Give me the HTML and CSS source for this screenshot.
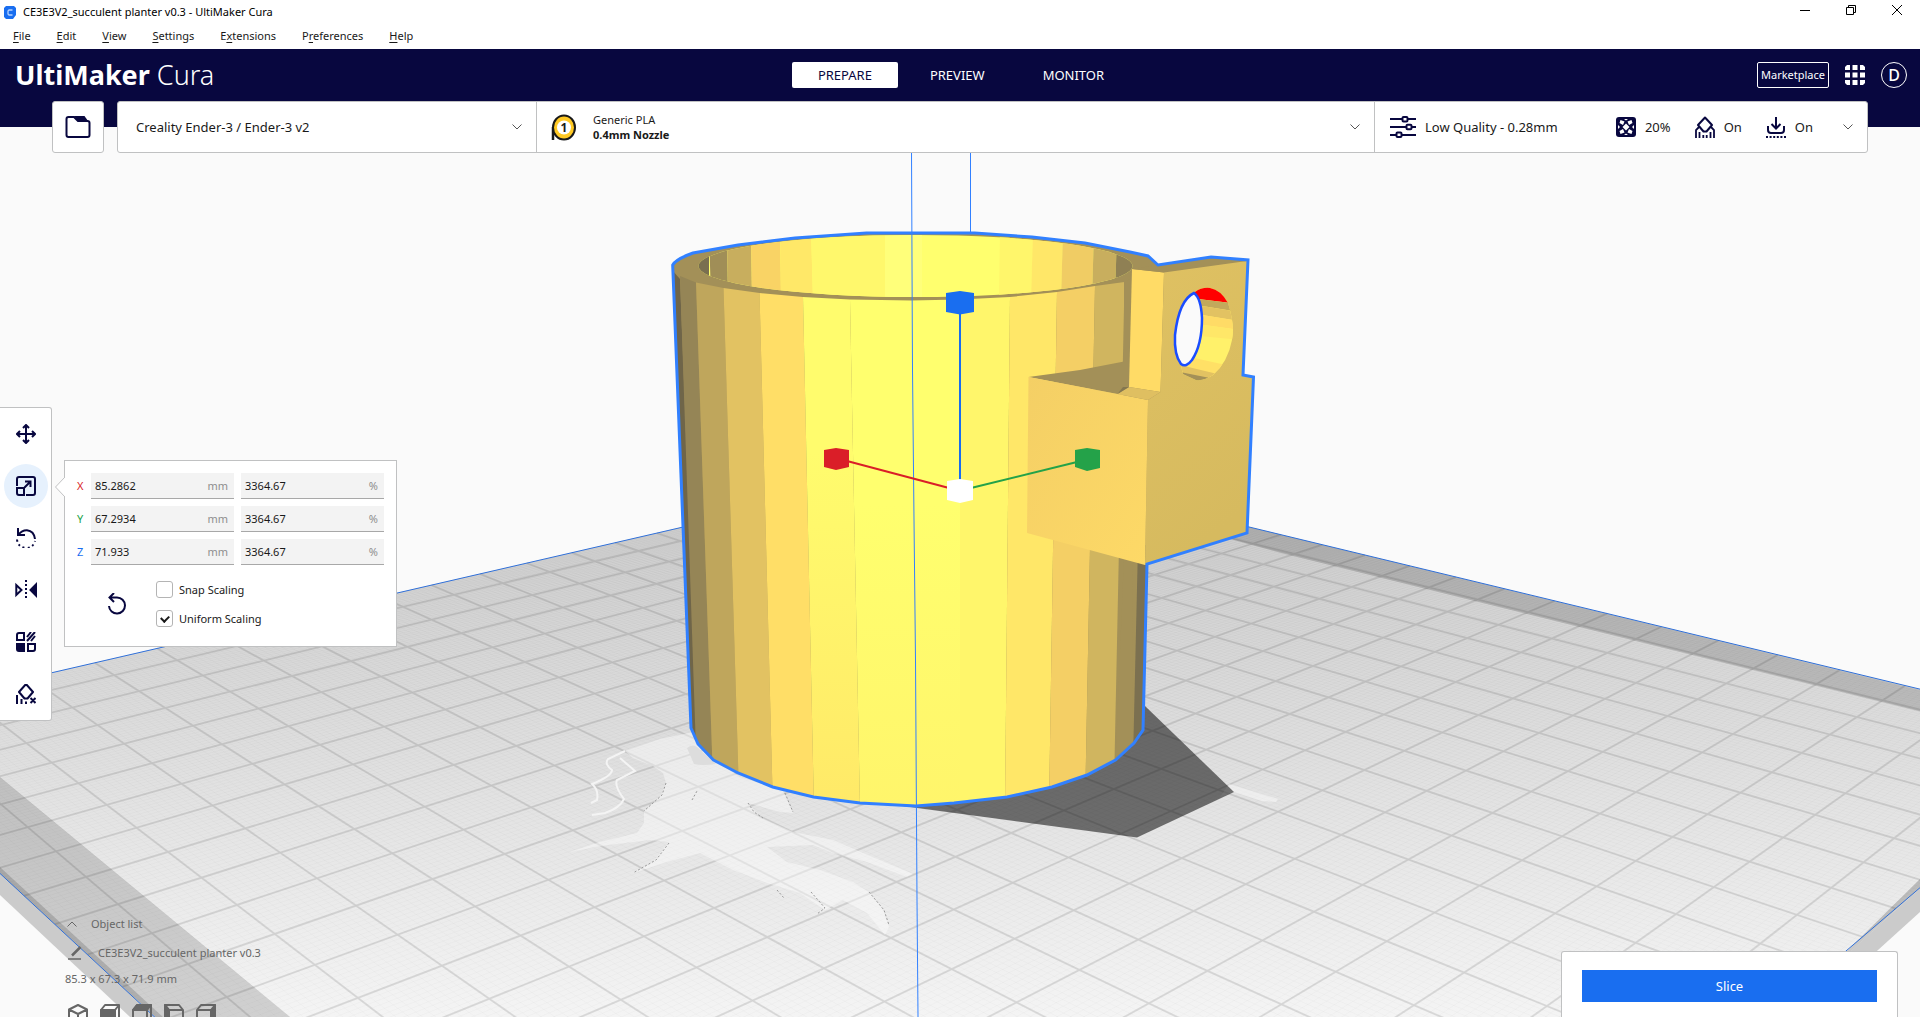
FILE: index.html
```html
<!DOCTYPE html>
<html lang="en">
<head>
<meta charset="utf-8">
<meta name="viewport" content="width=device-width, initial-scale=1">
<title>CE3E3V2_succulent planter v0.3 - UltiMaker Cura</title>
<link rel="stylesheet" href="styles.css">
</head>
<body>
<div class="titlebar">
  <svg class="app-icon" viewBox="0 0 12 13"><path d="M2 0h8l2 2v7l-3 4H2L0 11V2z" fill="#196ef0"/><path d="M8.500 4H5L4 5v3l1 1h3.500" fill="none" stroke="#b5d2ff" stroke-width="1.300"/></svg>
  <span class="window-title">CE3E3V2_succulent planter v0.3 - UltiMaker Cura</span>
  <div class="window-buttons">
    <button aria-label="Minimize"><svg viewBox="0 0 12 12"><path d="M1 6.500h10"/></svg></button>
    <button aria-label="Restore"><svg viewBox="0 0 12 12"><path d="M1.500 3.500h7v7h-7zM3.500 3.500v-2h7v7h-2"/></svg></button>
    <button aria-label="Close"><svg viewBox="0 0 12 12"><path d="M1 1l10 10M11 1L1 11"/></svg></button>
  </div>
</div>
<nav class="menubar">
  <button><u>F</u>ile</button><button><u>E</u>dit</button><button><u>V</u>iew</button><button><u>S</u>ettings</button><button>E<u>x</u>tensions</button><button>P<u>r</u>eferences</button><button><u>H</u>elp</button>
</nav>

<div class="stage">
  <svg class="scene" viewBox="0 49 1920 968" preserveAspectRatio="xMidYMin slice" aria-hidden="true">
    <defs>
      <linearGradient id="plate" gradientUnits="userSpaceOnUse" x1="0" y1="500" x2="0" y2="1017"><stop offset="0" stop-color="#cccccc"/><stop offset=".5" stop-color="#dfdfdf"/><stop offset="1" stop-color="#f4f4f4"/></linearGradient>
      <linearGradient id="warm" x1="0" y1="0" x2="0" y2="1"><stop offset=".3" stop-color="#fffc6d"/><stop offset="1" stop-color="#ffe968"/></linearGradient>
      <linearGradient id="core" x1="0" y1="0" x2="0" y2="1"><stop offset=".4" stop-color="#ffff6e"/><stop offset="1" stop-color="#fff56b"/></linearGradient>
      <linearGradient id="arm" x1="0" y1="0" x2=".3" y2="1"><stop offset="0" stop-color="#dfc162"/><stop offset="1" stop-color="#d6ba5f"/></linearGradient>
      <linearGradient id="block" x1="0" y1="0" x2="1" y2="1"><stop offset="0" stop-color="#f4cf65"/><stop offset="1" stop-color="#fdd967"/></linearGradient>
      <path id="mug-shape" d="M672.700 265Q676 259 693 253L738 245L795 238L866.500 233H974.700L1032 237L1085 243L1130 252L1148 256L1158 265L1211 257L1248 260L1243 375L1253.500 377L1247 533L1147 564L1143 730L1134 743L1115.500 760L1087 775L1052 787L1007 797L954 803L916 806L860 803L813.500 797L772.700 787L738 773L713.500 760L698 744L691 728L683 526Z"/>
      <clipPath id="mug-clip"><use href="#mug-shape"/></clipPath>
      <clipPath id="bore"><ellipse cx="915.500" cy="266" rx="217" ry="31"/></clipPath>
      <clipPath id="hole"><path d="M1195 292Q1202 287 1210 288Q1221 290 1228 303Q1235 325 1232 340Q1228 362 1213 375Q1204 381 1196 380L1183 374L1177 350L1180 315Z"/></clipPath>
    </defs>
    <g id="bed"></g>
    <path d="M1147 514L1160 517L1249 527L1920 690V711.500L1280 552.700L1234 540Z" fill="#000" opacity=".15"/>
    <path d="M0 777L290 1017H163L0 867Z" fill="#000" opacity=".145"/>
    <path d="M0 867L163 1017H155L0 874Z" fill="#000" opacity=".28"/>
    <path d="M0 874L155 1017H130L0 895Z" fill="#cbcbcb"/>
    <path d="M1920 879L1780 1017H1779L1920 888Z" fill="#000" opacity=".2"/>
    <path d="M1920 888L1778 1017H1804L1920 912Z" fill="#cbcbcb"/>
    <path id="bed-edge" fill="none" stroke="#2f6fd8" stroke-width="1"/>
    <g class="marks">
      <path d="M625 751L660 739L693 732L700 746L717 762L740 777L783 791L793 813L780 812L748 803L760 817L793 832L833 840L863 853L913 874L907 877L867 862L833 853L813 845L767 847L787 862L820 870L853 882L870 893L883 910L889 927L885 935L867 913L843 900L825 910L800 893L767 883L733 870L700 853L667 862L633 873L653 862L669 842L650 840L600 846L570 852L600 842L637 833L644 823L644 811L660 797L666 783L663 773L653 766L633 758Z"/>
      <path d="M687 748Q694 742 700 750L716 764Q702 766 694 764Z" class="hollow"/>
      <path class="trace" d="M625 751L608 759Q604 764 612 770Q612 776 592 784Q599 790 597 800L591 803M620 758L635 771L617 780Q614 786 624 799Q620 808 605 813L592 815"/>
      <path d="M1229 784L1278 799L1276 802L1262 801L1234 792L1220 797Z"/>
      <path class="dash" d="M785 793L793 812M748 803L754 812L763 818M666 783L662 795L644 811M669 843L656 860L633 873M869 892L884 910L889 925M777 890L784 898M811 892L825 908L817 914M692 800L697 791"/>
    </g>
    <path d="M1145 706L1234 792L1137 837.500L895 805L1000 740Z" fill="#000" opacity=".53"/>
    <path d="M970.500 150V234" stroke="#3180ff"/>

    <use href="#mug-shape" fill="#a39058"/>
    <g clip-path="url(#mug-clip)">
      <path d="M672 270L680 279L698 744V810H680L670 300Z" fill="#6f6549"/>
      <path d="M680 276L696 282.500L714 810H698Z" fill="#958556"/>
      <path d="M696 282.500L723.500 288L739.500 810H714Z" fill="#bfa65c"/>
      <path d="M723.500 288L759.500 293L773 810H739.500Z" fill="#e2c262"/>
      <path d="M759.500 293L803 297L814 810H773Z" fill="#ffde67"/>
      <path d="M803 297L850 299.500L860 810H814Z" fill="url(#warm)"/>
      <path d="M850 299.500L911 300.500L960 299.500V810H860Z" fill="url(#core)"/>
      <path d="M960 299.500L1010 297L1005 810H960Z" fill="#fff66b"/>
      <path d="M1010 297L1057 292L1049 810H1005Z" fill="#ffe768"/>
      <path d="M1057 292L1095 286L1085 810H1049Z" fill="#f4cf65"/>
      <path d="M1095 286L1124.500 282L1113.500 810H1085Z" fill="#d0b55f"/>
      <path d="M1124.500 545V282L1132 278V545L1133 810H1113.500Z" fill="#a39058"/>
      <path d="M1138 545H1150L1143 760H1133Z" fill="#7b7050"/>
    </g>
    <g clip-path="url(#bore)">
      <path d="M690 230H1140V300H690Z" fill="#ffff6e"/>
      <path d="M690 230H709V300H690Z" fill="#7a6f50"/>
      <path d="M709 230H727L728 300H711Z" fill="#a08e57"/>
      <path d="M727 230H751L752 300H728Z" fill="#c8ae5e"/>
      <path d="M751 230H780L781 300H752Z" fill="#f9d365"/>
      <path d="M780 230H811L813 300H781Z" fill="#ffe868"/>
      <path d="M811 230H885V300H813Z" fill="#fff86c"/>
      <path d="M885 230H922V300H885Z" fill="#ffff7a"/>
      <path d="M1000 230H1033L1031 300H999Z" fill="#fff66b"/>
      <path d="M1033 230H1063L1061 300H1031Z" fill="#ffe768"/>
      <path d="M1063 230H1094L1092 300H1061Z" fill="#f0cc64"/>
      <path d="M1094 230H1117L1115 300H1092Z" fill="#c8ae5e"/>
      <path d="M1117 230H1140V300H1115Z" fill="#8f8054"/>
    </g>
    <path d="M1028.500 377L1080 370L1124 361.500V282L1132 278V390L1117 394Z" fill="#a39058"/>
    <path d="M1132 269L1164 272.500L1160.500 392L1129 387Z" fill="#ffdb66"/>
    <path d="M1132 269L1158 265L1211 258L1247 261L1164 272.500Z" fill="#a39058"/>
    <path d="M1164 272.500L1247 261L1243 375L1253 378L1247 533L1145 565L1148 400L1160.500 392Z" fill="url(#arm)"/>
    <path d="M1028.500 377L1117.500 394L1148 400L1145 565L1027 533Z" fill="url(#block)"/>
    <path d="M1117.500 394L1129 387L1160.500 392L1148 400Z" fill="#dfbf61"/>
    <path d="M1117.500 394L1123 387H1129Z" fill="#847750"/>
    <g clip-path="url(#hole)">
      <path d="M1170 285H1240V385H1170Z" fill="#fff16a"/>
      <path d="M1190 280H1240V304L1190 298Z" fill="#f00"/>
      <path d="M1190 298L1240 304V312L1190 304Z" fill="#c2a95c"/>
      <path d="M1190 304L1240 312V321L1190 313Z" fill="#e2c262"/>
      <path d="M1190 313L1240 321V330L1190 323Z" fill="#ffdb66"/>
      <path d="M1190 323L1240 330V340L1190 335Z" fill="#ffe768"/>
      <path d="M1185 356L1240 368V380H1180Z" fill="#ffe066"/>
      <path d="M1180 365L1230 377V390H1180Z" fill="#e2c262"/>
      <path d="M1180 372L1215 379V390H1180Z" fill="#a39058"/>
    </g>
    <path d="M1194 293Q1201 298 1202 318Q1202 345 1192 360Q1186 368 1181 364Q1174 355 1175 335Q1179 300 1194 293Z" fill="#fafafa" stroke="#1a4dff" stroke-width="2.500"/>
    <use href="#mug-shape" fill="none" stroke="#3180ff" stroke-width="3"/>
    <path d="M911.500 150L912.500 370L914 520L915.500 660L917 900L918 1017" stroke="#3180ff" fill="none"/>

    <path d="M960 310V482" stroke="#196ef0" stroke-width="2"/>
    <path d="M847 461L949 488" stroke="#da1e28" stroke-width="2"/>
    <path d="M1077 462L971 488" stroke="#24a249" stroke-width="2"/>
    <path d="M946 293L960 291L974 293V312L960 314.500L946 312Z" fill="#196ef0"/>
    <path d="M824 450L836 448L849 450V467L836 470L824 467Z" fill="#da1e28"/>
    <path d="M1075 450L1087 448L1100 450V468L1087 471L1075 467Z" fill="#24a249"/>
    <path d="M947 481L960 479L973 481V500L960 503L947 500Z" fill="#fff"/>
  </svg>

  <div class="ui">
    <header class="header">
      <div class="brand"><b>UltiMaker</b> Cura</div>
      <div class="tabs">
        <button class="tab active">PREPARE</button><button class="tab">PREVIEW</button><button class="tab">MONITOR</button>
      </div>
      <div class="account">
        <button class="market">Marketplace</button>
        <button class="plain" aria-label="Applications"><svg width="20" height="20" viewBox="0 0 20 20" fill="#fff"><path d="M2 0h3v5H0V2zM7.500 0h5v5h-5zM15 0h3l2 2v3h-5zM0 7.500h5v5H0zM7.500 7.500h5v5h-5zM15 7.500h5v5h-5zM0 15h5v5H2l-2-2zM7.500 15h5v5h-5zM15 15h5v3l-2 2h-3z"/></svg></button>
        <button class="avatar">D</button>
      </div>
    </header>

    <div class="configbar">
      <button class="open" aria-label="Open file"><svg width="26" height="24" viewBox="0 0 26 24"><path d="M1.500 4Q1.500 2 3.500 2H9l4 4h9.500q2 0 2 2v12q0 2-2 2h-19q-2 0-2-2z" fill="none" stroke="#08073f" stroke-width="2"/><path d="M9 1h10.500l3.500 5H13z" fill="#08073f"/></svg></button>
      <div class="settings">
        <button class="machine"><span>Creality Ender-3 / Ender-3 v2</span><svg class="chev" viewBox="0 0 10 6"><path d="M.5.5L5 5 9.500.5"/></svg></button>
        <button class="material">
          <svg width="26" height="27" viewBox="0 0 26 27"><path d="M2 13v13" stroke="#191919" stroke-width="2.500"/><ellipse cx="13" cy="13.500" rx="11" ry="12" fill="#ffc924" stroke="#191919" stroke-width="2"/><circle cx="13" cy="13.500" r="7" fill="#fff"/><text x="13" y="18" class="slot">1</text></svg>
          <span class="stack"><span>Generic PLA</span><b>0.4mm Nozzle</b></span>
          <svg class="chev" viewBox="0 0 10 6"><path d="M.5.5L5 5 9.500.5"/></svg>
        </button>
        <button class="profile">
          <svg width="26" height="22" viewBox="0 0 26 22" fill="none" stroke="#08073f" stroke-width="2"><path d="M0 3h12M18 3h8M0 11h16M22 11h4M0 19h6M12 19h14"/><rect x="12.500" y="1" width="5" height="4.500" rx="1"/><rect x="16.500" y="8.700" width="5" height="4.500" rx="1"/><rect x="6.500" y="16.500" width="5" height="4.500" rx="1"/></svg>
          <span class="quality">Low Quality - 0.28mm</span>
          <span class="opt"><svg width="20" height="20" viewBox="0 0 20 20"><rect width="20" height="20" rx="3" fill="#08073f"/><path d="M10 6.500L13.500 10 10 13.500 6.500 10zM4.500 3L8.500 4.500 7 8 3.500 6zM15.500 3L11.500 4.500 13 8l3.500-2zM4.500 17l4-1.500L7 12l-3.500 2zM15.500 17l-4-1.500L13 12l3.500 2zM2 8v4l2-2zM18 8v4l-2-2zM8 2h4l-2 1.500zM8 18h4l-2-1.500z" fill="#fff"/></svg>20%</span>
          <span class="opt"><svg width="20" height="22" viewBox="0 0 20 22" fill="none" stroke="#08073f"><path d="M10 1.500L17 9 11.500 15.500H8.500L3 9z" stroke-width="2" stroke-linejoin="round"/><path d="M1 22v-8l3-3M19 22v-8l-3-3M4.500 16v6M8.300 19v3M11.700 19v3M15.500 16v6" stroke-width="1.800"/></svg>On</span>
          <span class="opt"><svg width="20" height="21" viewBox="0 0 20 21" fill="none" stroke="#08073f" stroke-width="2"><path d="M10 0v11M5.500 7L10 11.500 14.500 7M2 9v4q0 3 3 3h10q3 0 3-3V9"/><path d="M0 20h20" stroke-dasharray="2 1.600"/></svg>On</span>
          <svg class="chev" viewBox="0 0 10 6"><path d="M.5.5L5 5 9.500.5"/></svg>
        </button>
      </div>
    </div>

    <main class="workspace">
      <div class="toolbar">
        <button aria-label="Move"><svg viewBox="0 0 20 20"><path d="M10 1v18M1 10h18M7 4l3-3 3 3M7 16l3 3 3-3M4 7l-3 3 3 3M16 7l3 3-3 3"/></svg></button>
        <button class="on" aria-label="Scale"><svg viewBox="0 0 20 20"><path d="M1 10V3q0-2 2-2h14q2 0 2 2v14q0 2-2 2h-7M1 12h7v7H3q-2 0-2-2zM8.500 11.500L14.500 5.500M9 5.500h5.500V11"/></svg></button>
        <button aria-label="Rotate"><svg viewBox="0 0 20 20"><path d="M2 0v7h7M2.500 6.500Q6 2 11 2.200Q18 3 19 11"/><path d="M1 11.500Q2 19.500 10 20Q17 20 19 13" stroke-dasharray="2 3"/></svg></button>
        <button aria-label="Mirror"><svg class="wide" viewBox="0 0 22 20"><path d="M1.300 5v10L6.500 10z"/><path d="M11 0v20" stroke-dasharray="2 2"/><path d="M21 4.500v11L15.500 10z" fill="#08073f"/></svg></button>
        <button aria-label="Per model settings"><svg viewBox="0 0 20 20"><path d="M1 8V3q0-2 2-2h5v7zM12 12h7v5q0 2-2 2h-5zM11 5l4-5M11 9l8-9M15 9l4-5"/><path d="M1 12h7v7H3q-2 0-2-2z" fill="#08073f"/></svg></button>
        <button aria-label="Support blocker"><svg viewBox="0 0 20 20"><path d="M10 0L17 8 11.500 14.500H8.500L3 8z" stroke-linejoin="round"/><path d="M1 11v9M5.500 15v5M10 17.500V20M14.500 14l5 5M19.500 14l-5 5"/></svg></button>
      </div>

      <form class="panel">
        <svg class="panel-tip" viewBox="0 0 10 20"><path d="M10 0L.5 10 10 20" fill="#fff" stroke="#c0c1c2"/></svg>
        <div class="axis"><label class="x" for="x-mm">X</label><span class="field"><input id="x-mm" value="85.2862">mm</span><span class="field"><input aria-label="X percent" value="3364.67">%</span></div>
        <div class="axis"><label class="y" for="y-mm">Y</label><span class="field"><input id="y-mm" value="67.2934">mm</span><span class="field"><input aria-label="Y percent" value="3364.67">%</span></div>
        <div class="axis"><label class="z" for="z-mm">Z</label><span class="field"><input id="z-mm" value="71.933">mm</span><span class="field"><input aria-label="Z percent" value="3364.67">%</span></div>
        <div class="scale-options">
          <button type="button" class="plain" aria-label="Reset"><svg width="20" height="22" viewBox="0 0 20 22" fill="none" stroke="#08073f" stroke-width="2"><path d="M2 13a8 8 0 1 0 8-8.500H3M7 0L2.500 4.500 7 9"/></svg></button>
          <div class="checks">
            <label><input type="checkbox">Snap Scaling</label>
            <label><input type="checkbox" checked>Uniform Scaling</label>
          </div>
        </div>
      </form>
    </main>

    <footer class="footer">
      <div class="objects">
        <button class="row list"><svg width="10" height="6" viewBox="0 0 10 6"><path d="M.5 5.500L5 1l4.500 4.500" fill="none" stroke="#666"/></svg>Object list</button>
        <button class="row name"><svg width="14" height="14" viewBox="0 0 14 14"><path d="M0 13h13" stroke="#666" stroke-width="1.500"/><path d="M4 9.500L12.500 1" stroke="#666" stroke-width="2.500"/></svg>CE3E3V2_succulent planter v0.3</button>
        <div class="row">85.3 x 67.3 x 71.9 mm</div>
        <div class="views">
          <button aria-label="3D view"><svg viewBox="0 0 20 20"><path d="M1 5.500L10 1l9 4.500v9L10 19l-9-4.500zM1 5.500l9 4.500 9-4.500M10 10v9"/></svg></button>
          <button aria-label="Front view"><svg viewBox="0 0 20 20"><path d="M1 6l4-5h14v13l-4 5H1zM1 6h14l4-5M15 6v13"/><path d="M1 6h14v13H1z" fill="#666"/></svg></button>
          <button aria-label="Top view"><svg viewBox="0 0 20 20"><path d="M1 6l4-5h14v13l-4 5H1zM15 6v13"/><path d="M1 6l4-5h14l-4 5z" fill="#666"/></svg></button>
          <button aria-label="Left view"><svg viewBox="0 0 20 20"><path d="M19 6l-4-5H1v13l4 5h14zM19 6H5L1 1"/><path d="M1 1l4 5v13l-4-5z" fill="#666"/></svg></button>
          <button aria-label="Right view"><svg viewBox="0 0 20 20"><path d="M1 6l4-5h14v13l-4 5H1zM1 6h14"/><path d="M15 6l4-5v13l-4 5z" fill="#666"/></svg></button>
        </div>
      </div>
      <div class="slice-card"><button class="slice">Slice</button></div>
    </footer>
  </div>
</div>
<script src="bed.js"></script>
</body>
</html>
```
FILE: styles.css
```css
* { box-sizing: border-box; }
:root { --navy: #08073f; --line: #c0c1c2; --text: #191919; }
html, body { height: 100%; }
body {
  margin: 0;
  display: flex;
  flex-direction: column;
  overflow: hidden;
  background: #fff;
  color: var(--text);
  font: 11px/16px "Noto Sans", "Open Sans", sans-serif;
}
button {
  margin: 0;
  padding: 0;
  border: 0;
  background: none;
  color: inherit;
  font: inherit;
}
b { font-weight: 700; }
svg { flex: none; }

.titlebar { display: flex; align-items: center; height: 24px; padding-left: 4px; color: #000; }
.app-icon { width: 12px; height: 13px; }
.window-title { margin-left: 7px; }
.window-buttons { display: flex; margin-left: auto; }
.window-buttons button { width: 46px; height: 20px; }
.window-buttons svg { display: block; width: 12px; height: 12px; margin: 2px auto 6px; fill: none; stroke: #000; }
.menubar { display: flex; gap: 26px; height: 24px; margin-bottom: 1px; padding: 0 13px; }
.menubar u { text-underline-offset: 2px; }

.stage { flex: 1; min-height: 0; display: grid; grid-template: 100% / 100%; background: #fafafa; }
.scene, .ui { grid-area: 1 / 1; width: 100%; height: 100%; min-height: 0; }
.ui { display: flex; flex-direction: column; z-index: 1; }
.marks path { fill: #fff; fill-opacity: .42; }
.marks .hollow { fill: #ddd; fill-opacity: 1; }
.marks .trace { fill: none; stroke: #f4f4f4; stroke-width: 2; }
.marks .dash { fill: none; stroke: #999; stroke-dasharray: 2 2; }
.minor { stroke: #000; stroke-opacity: .02; fill: none; }
.major { stroke: #000; stroke-opacity: .1; stroke-width: 2; fill: none; }

.header {
  flex: none;
  display: grid;
  grid-template-columns: 1fr auto 1fr;
  align-items: center;
  height: 78px;
  padding: 0 13px 26px 15px;
  background: var(--navy);
  color: #fff;
}
.brand { font-size: 27px; line-height: 32px; font-weight: 300; }
.tabs { display: flex; gap: 6px; }
.tab { height: 26px; padding: 0 26px; border-radius: 2px; font-size: 13px; }
.tab.active { background: #fff; color: var(--navy); }
.account { display: flex; justify-content: flex-end; align-items: center; gap: 16px; }
.market { width: 72px; height: 26px; border: 1px solid #fff; border-radius: 2px; }
.plain svg { display: block; }
.avatar { width: 26px; height: 26px; border: 1px solid #fff; border-radius: 50%; font-size: 16px; line-height: 24px; font-weight: 500; }

.configbar { flex: none; display: flex; gap: 13px; height: 52px; margin: -26px 52px 0 52px; }
.open { display: grid; place-items: center; width: 52px; background: #fff; border: 1px solid var(--line); border-radius: 3px; }
.settings { flex: 1; display: grid; grid-template-columns: 418px 1fr 493px; background: #fff; border: 1px solid var(--line); border-radius: 3px; font-size: 13px; }
.settings > button { display: flex; align-items: center; text-align: left; }
.settings > button + button { border-left: 1px solid var(--line); }
.chev { width: 10px; height: 6px; margin-left: auto; fill: none; stroke: #555; }
.machine { padding: 0 14px 0 18px; }
.material { padding: 0 14px; font-size: 11px; line-height: 15px; }
.slot { font-size: 12px; font-weight: 700; text-anchor: middle; fill: var(--text); }
.stack { display: grid; margin-left: 16px; }
.profile { padding: 0 14px 0 15px; }
.quality { margin: 0 auto 0 9px; }
.opt { display: flex; align-items: center; gap: 9px; margin-right: 24px; }
.profile .chev { margin-left: 6px; }

.workspace { flex: 1; min-height: 0; display: flex; align-items: center; padding-top: 63px; }
.toolbar { display: grid; width: 52px; background: #fff; border: 1px solid var(--line); border-left: 0; border-radius: 0 3px 3px 0; }
.toolbar button { display: grid; place-items: center; width: 44px; height: 44px; margin: 4px; border-radius: 50%; }
.toolbar .on { background: #e6f1fd; }
.toolbar svg { width: 20px; height: 20px; fill: none; stroke: var(--navy); stroke-width: 2; }
.toolbar svg.wide { width: 22px; }
.panel { position: relative; display: grid; grid-template-columns: 100%; gap: 7px; width: 333px; height: 187px; margin: -20px 0 0 12px; padding: 12px; align-content: start; background: #fff; border: 1px solid var(--line); }
.panel-tip { position: absolute; left: -10px; top: 16px; width: 10px; height: 20px; }
.axis { display: grid; grid-template-columns: 14px minmax(0, 1fr) 7px minmax(0, 1fr); align-items: center; }
.axis .field:last-child { grid-column: 4; }
.x { color: #da1e28; }
.y { color: #24a249; }
.z { color: #196ef0; }
.field { display: flex; align-items: center; height: 26px; padding: 0 6px 0 4px; background: #f3f3f3; border-bottom: 1px solid #a8a8a8; color: #8e8e8e; }
.field input { flex: 1; min-width: 0; padding: 0; border: 0; background: none; font: inherit; color: var(--text); }
.scale-options { display: flex; align-items: center; gap: 29px; margin-top: 9px; padding-left: 30px; }
.checks { display: grid; gap: 12px; }
.checks label { display: flex; align-items: center; gap: 6px; height: 17px; }
.checks input { appearance: none; width: 17px; height: 17px; margin: 0; border: 1px solid #b4b4b4; border-radius: 3px; background: #fff; display: grid; place-items: center; }
.checks input:checked::after { content: ""; width: 6px; height: 4px; margin-top: -2px; border: solid var(--text); border-width: 0 0 2px 2px; transform: rotate(-45deg); }

.footer { flex: none; display: flex; justify-content: space-between; align-items: flex-end; height: 106px; padding: 0 22px 0 65px; color: #666; }
.objects { height: 106px; }
.row { display: flex; align-items: center; height: 26px; }
.list { gap: 14px; padding-left: 2px; }
.name { gap: 16px; margin-top: 3px; padding-left: 3px; }
.views { display: flex; gap: 12px; height: 13px; margin-top: 12px; padding-left: 3px; }
.views svg { display: block; width: 20px; height: 20px; fill: none; stroke: #666; stroke-width: 2; stroke-linejoin: round; }
.slice-card { width: 337px; height: 66px; padding: 18px 20px 0; background: #fff; border: 1px solid var(--line); border-bottom: 0; border-radius: 3px 3px 0 0; }
.slice { width: 100%; height: 32px; background: #196ef0; color: #fff; font-size: 13px; }
```
FILE: bed.js
```js
// Camera projection of the build plate: grid units are 10 mm cells.
const camera = [17.54645, -53.7481, 1324.565, 0.0623, -0.04825, 543.873, -0.0185693, -0.0181893];
const bed = { k0: -9.8, k1: 13.75, j0: 0.08, j1: 23.72 };

function project(k, j) {
  const w = camera[6] * k + camera[7] * j + 1;
  const x = (camera[0] * k + camera[1] * j + camera[2]) / w;
  const y = (camera[3] * k + camera[4] * j + camera[5]) / w;
  return x.toFixed(1) + " " + y.toFixed(1);
}

function gridPath(step) {
  let d = "";
  for (let k = Math.ceil(bed.k0 / step); k * step <= bed.k1; k++) {
    d += "M" + project(k * step, bed.j0) + "L" + project(k * step, bed.j1);
  }
  for (let j = Math.ceil(bed.j0 / step); j * step <= bed.j1; j++) {
    d += "M" + project(bed.k0, j * step) + "L" + project(bed.k1, j * step);
  }
  return d;
}

const border = "M" + [
  project(bed.k0, bed.j0), project(bed.k1, bed.j0),
  project(bed.k1, bed.j1), project(bed.k0, bed.j1)
].join("L") + "Z";

document.getElementById("bed").innerHTML =
  '<path d="' + border + '" fill="url(#plate)"/>' +
  '<path class="minor" d="' + gridPath(0.1) + '"/>' +
  '<path class="major" d="' + gridPath(1) + '"/>';
document.getElementById("bed-edge").setAttribute("d", border);
```
